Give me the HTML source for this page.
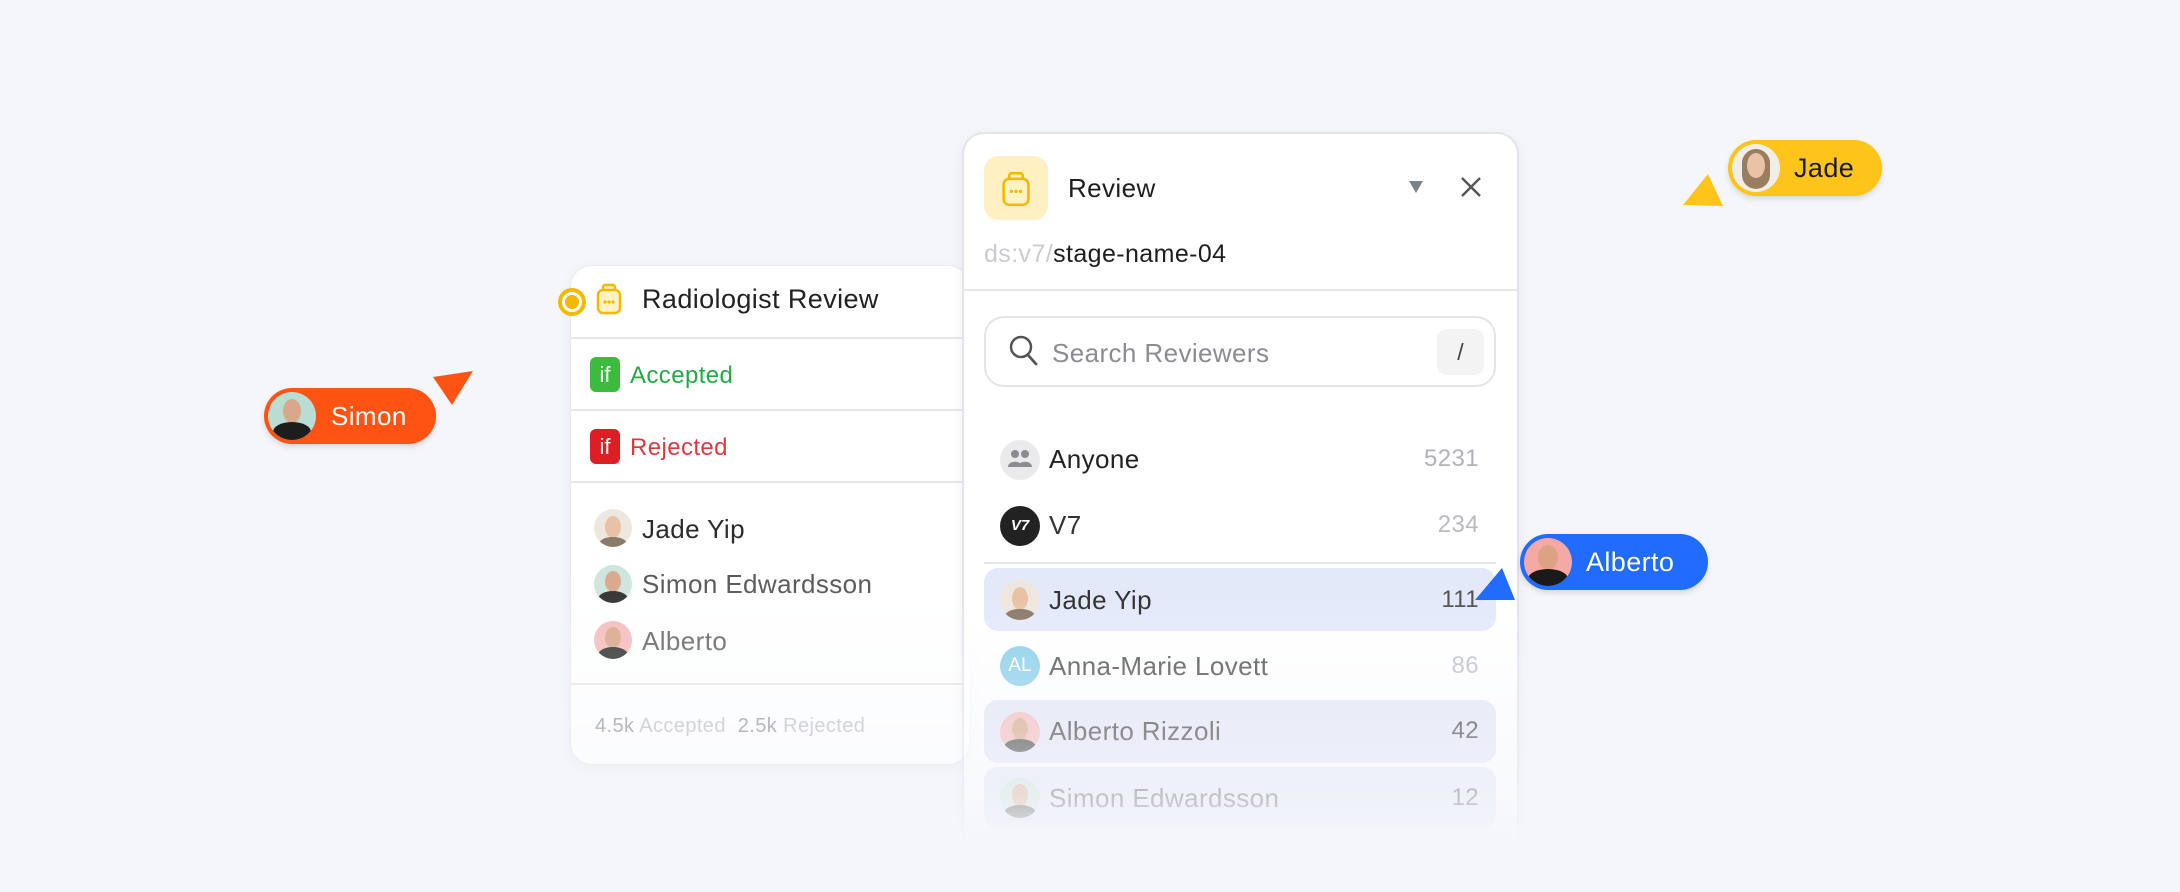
<!DOCTYPE html>
<html><head><meta charset="utf-8"><style>
*{box-sizing:border-box;margin:0;padding:0}
body{width:2180px;height:874px;background:#f4f6fa;position:relative;overflow:hidden;font-family:"Liberation Sans",sans-serif}
.abs{position:absolute}
.grp{position:absolute;left:0;top:0;width:2180px;height:874px}
.g1{-webkit-mask-image:linear-gradient(to bottom,#000 0,#000 560px,rgba(0,0,0,.75) 700px,rgba(0,0,0,.6) 780px,rgba(0,0,0,0) 800px);mask-image:linear-gradient(to bottom,#000 0,#000 560px,rgba(0,0,0,.75) 700px,rgba(0,0,0,.6) 780px,rgba(0,0,0,0) 800px)}
.g2{-webkit-mask-image:linear-gradient(to bottom,#000 0,#000 600px,rgba(0,0,0,.6) 730px,rgba(0,0,0,.3) 800px,rgba(0,0,0,0) 845px);mask-image:linear-gradient(to bottom,#000 0,#000 600px,rgba(0,0,0,.6) 730px,rgba(0,0,0,.3) 800px,rgba(0,0,0,0) 845px)}
.card{position:absolute;left:570px;top:265px;width:400px;height:500px;background:#fff;border:1px solid #e8e9ee;border-radius:22px;box-shadow:0 4px 14px rgba(30,40,80,.05)}
.panel{position:absolute;left:962px;top:132px;width:557px;height:760px;background:#fff;border:2px solid #e3e4e8;border-radius:22px;box-shadow:0 4px 14px rgba(30,40,80,.06)}
.hl{position:absolute;height:2px;background:#e6e7eb}
.t{position:absolute;white-space:nowrap;line-height:1;letter-spacing:0.4px}
.av{position:absolute;border-radius:50%;overflow:hidden}
.pill{position:absolute;border-radius:30px;box-shadow:0 3px 6px rgba(0,0,0,.12)}
</style></head><body>

<div class="grp g1">
<div class="card"></div>
<div class="hl" style="left:571px;top:337px;width:392px"></div>
<div class="hl" style="left:571px;top:409px;width:392px"></div>
<div class="hl" style="left:571px;top:481px;width:392px"></div>
<div class="hl" style="left:571px;top:683px;width:392px"></div>
<div class="abs" style="left:558px;top:288px;width:28px;height:28px;border-radius:50%;border:4px solid #f5b800;background:#fff"></div>
<div class="abs" style="left:565px;top:295px;width:14px;height:14px;border-radius:50%;background:#f5b800"></div>
<svg class="abs" style="left:596px;top:283px" width="26" height="32" viewBox="0 0 26 32"><rect x="7" y="2" width="12" height="6" rx="2" fill="#fff3c4" stroke="#f5b800" stroke-width="2.5"/><rect x="2" y="7" width="22" height="23" rx="5" fill="#fff3c4" stroke="#f5b800" stroke-width="2.5"/><circle cx="9" cy="19" r="1.6" fill="#f5b800"/><circle cx="13" cy="19" r="1.6" fill="#f5b800"/><circle cx="17" cy="19" r="1.6" fill="#f5b800"/></svg>
<div class="t" style="left:642px;top:286px;font-size:27px;color:#222">Radiologist Review</div>
<div class="abs" style="left:590px;top:357px;width:30px;height:35px;border-radius:6px;background:#3dbb3f;color:#fff;font-size:22px;text-align:center;line-height:35px">if</div>
<div class="t" style="left:630px;top:364px;font-size:24px;color:#26a844">Accepted</div>
<div class="abs" style="left:590px;top:429px;width:30px;height:35px;border-radius:6px;background:#dc1f25;color:#fff;font-size:22px;text-align:center;line-height:35px">if</div>
<div class="t" style="left:630px;top:436px;font-size:24px;color:#dc3a3f">Rejected</div>
<div class="av" style="left:594px;top:509px;width:38px;height:38px;background:#eee7df"><div class="abs" style="left:11px;top:7px;width:16px;height:22px;border-radius:50%;background:#e9c2a6"></div><div class="abs" style="left:5px;top:28px;width:28px;height:14px;border-radius:50%;background:#8a7a6a"></div></div>
<div class="t" style="left:642px;top:516px;font-size:26px;color:#2c2c2e">Jade Yip</div>
<div class="av" style="left:594px;top:565px;width:38px;height:38px;background:#cde4dc"><div class="abs" style="left:11px;top:6px;width:16px;height:21px;border-radius:50%;background:#d9a789"></div><div class="abs" style="left:4px;top:26px;width:30px;height:16px;border-radius:50%;background:#2c2c2c"></div></div>
<div class="t" style="left:642px;top:571px;font-size:26px;color:#555">Simon Edwardsson</div>
<div class="av" style="left:594px;top:621px;width:38px;height:38px;background:#f5bcbc"><div class="abs" style="left:11px;top:6px;width:16px;height:21px;border-radius:50%;background:#d9a789"></div><div class="abs" style="left:4px;top:26px;width:30px;height:16px;border-radius:50%;background:#333"></div></div>
<div class="t" style="left:642px;top:628px;font-size:26px;color:#666">Alberto</div>
<div class="t" style="left:595px;top:716px;font-size:20px;color:#9a9ca3">4.5k <span style="color:#c3c5cb">Accepted</span>&nbsp; 2.5k <span style="color:#c3c5cb">Rejected</span></div>
</div>

<div class="grp g2">
<div class="panel"></div>
<div class="abs" style="left:984px;top:156px;width:64px;height:64px;border-radius:14px;background:#fff0c4"></div>
<svg class="abs" style="left:1001px;top:171px" width="30" height="36" viewBox="0 0 26 32"><rect x="7" y="2" width="12" height="6" rx="2" fill="#fff3c4" stroke="#f5b800" stroke-width="2.3"/><rect x="2" y="7" width="22" height="23" rx="5" fill="#fff3c4" stroke="#f5b800" stroke-width="2.3"/><circle cx="9" cy="18" r="1.5" fill="#f5b800"/><circle cx="13" cy="18" r="1.5" fill="#f5b800"/><circle cx="17" cy="18" r="1.5" fill="#f5b800"/></svg>
<div class="t" style="left:1068px;top:175px;font-size:26px;color:#1e1e1e">Review</div>
<svg class="abs" style="left:1408px;top:180px" width="16" height="14"><path d="M1 1h14l-7 12z" fill="#7d818a"/></svg>
<svg class="abs" style="left:1460px;top:176px" width="22" height="22"><path d="M2 2L20 20M20 2L2 20" stroke="#555" stroke-width="2.4"/></svg>
<div class="t" style="left:984px;top:242px;font-size:25px;color:#1e1e1e"><span style="color:#c9cbd0">ds:v7/</span>stage-name-04</div>
<div class="hl" style="left:963px;top:289px;width:555px"></div>
<div class="abs" style="left:984px;top:316px;width:512px;height:71px;border:2px solid #e3e4e8;border-radius:20px"></div>
<svg class="abs" style="left:1008px;top:334px" width="34" height="36"><circle cx="13" cy="13" r="10" fill="none" stroke="#555" stroke-width="2.5"/><path d="M20 21l8 9" stroke="#555" stroke-width="2.8" stroke-linecap="round"/></svg>
<div class="t" style="left:1052px;top:340px;font-size:26px;color:#8a8c92">Search Reviewers</div>
<div class="abs" style="left:1437px;top:329px;width:47px;height:46px;border-radius:10px;background:#f3f3f4;color:#444;font-size:23px;text-align:center;line-height:46px">/</div>
<div class="av" style="left:1000px;top:440px;width:40px;height:40px;background:#eaeaec"></div>
<svg class="abs" style="left:1007px;top:449px" width="26" height="20"><circle cx="8" cy="5" r="4" fill="#8a8c92"/><circle cx="18" cy="5" r="4" fill="#8a8c92"/><path d="M1 18c0-7 14-7 14 0zM11 18c0-7 14-7 14 0z" fill="#8a8c92"/></svg>
<div class="t" style="left:1049px;top:446px;font-size:26px;color:#222">Anyone</div>
<div class="t" style="left:1390px;top:447px;width:89px;text-align:right;font-size:24px;color:#b0b2b8">5231</div>
<div class="av" style="left:1000px;top:506px;width:40px;height:40px;background:#222;color:#fff;font-size:15px;font-weight:bold;text-align:center;line-height:40px;font-style:italic">V7</div>
<div class="t" style="left:1049px;top:512px;font-size:26px;color:#333">V7</div>
<div class="t" style="left:1390px;top:513px;width:89px;text-align:right;font-size:24px;color:#b8bac0">234</div>
<div class="hl" style="left:984px;top:562px;width:512px"></div>
<div class="abs" style="left:984px;top:568px;width:512px;height:63px;border-radius:14px;background:#e4e9fa"></div>
<div class="av" style="left:1000px;top:580px;width:40px;height:40px;background:#eee7df"><div class="abs" style="left:12px;top:7px;width:16px;height:23px;border-radius:50%;background:#e9c2a6"></div><div class="abs" style="left:5px;top:29px;width:30px;height:14px;border-radius:50%;background:#8a7a6a"></div></div>
<div class="t" style="left:1049px;top:587px;font-size:26px;color:#333">Jade Yip</div>
<div class="t" style="left:1390px;top:588px;width:89px;text-align:right;font-size:24px;color:#555">111</div>
<div class="av" style="left:1000px;top:646px;width:40px;height:40px;background:#8fd1ea;color:#fff;font-size:19px;text-align:center;line-height:40px">AL</div>
<div class="t" style="left:1049px;top:653px;font-size:26px;color:#555">Anna-Marie Lovett</div>
<div class="t" style="left:1390px;top:654px;width:89px;text-align:right;font-size:24px;color:#c0c2c8">86</div>
<div class="abs" style="left:984px;top:700px;width:512px;height:63px;border-radius:14px;background:#e4e8f8"></div>
<div class="av" style="left:1000px;top:712px;width:40px;height:40px;background:#f5bcbc"><div class="abs" style="left:12px;top:6px;width:16px;height:22px;border-radius:50%;background:#d9a789"></div><div class="abs" style="left:4px;top:27px;width:32px;height:16px;border-radius:50%;background:#444"></div></div>
<div class="t" style="left:1049px;top:718px;font-size:26px;color:#444">Alberto Rizzoli</div>
<div class="t" style="left:1390px;top:719px;width:89px;text-align:right;font-size:24px;color:#444">42</div>
<div class="abs" style="left:984px;top:767px;width:512px;height:63px;border-radius:14px;background:#e4e8f8"></div>
<div class="av" style="left:1000px;top:778px;width:40px;height:40px;background:#cde4dc"><div class="abs" style="left:12px;top:6px;width:16px;height:22px;border-radius:50%;background:#d9a789"></div><div class="abs" style="left:4px;top:27px;width:32px;height:16px;border-radius:50%;background:#333"></div></div>
<div class="t" style="left:1049px;top:785px;font-size:26px;color:#555">Simon Edwardsson</div>
<div class="t" style="left:1390px;top:786px;width:89px;text-align:right;font-size:24px;color:#555">12</div>
</div>

<div class="pill" style="left:264px;top:388px;width:172px;height:56px;background:#ff5314"></div>
<div class="av" style="left:268px;top:392px;width:48px;height:48px;background:#b9ddd3"><div class="abs" style="left:15px;top:7px;width:18px;height:24px;border-radius:50%;background:#d9a789"></div><div class="abs" style="left:5px;top:30px;width:38px;height:20px;border-radius:50%;background:#1d1d1d"></div></div>
<div class="t" style="left:331px;top:403px;font-size:26px;color:#fff">Simon</div>
<svg class="abs" style="left:430px;top:368px" width="46" height="42"><path d="M3 9L43 3L22 37z" fill="#ff5314"/></svg>

<div class="pill" style="left:1728px;top:140px;width:154px;height:56px;background:#fdc41a"></div>
<div class="av" style="left:1732px;top:144px;width:48px;height:48px;background:#f1ede8"><div class="abs" style="left:10px;top:5px;width:28px;height:40px;border-radius:14px;background:#9a7c5f"></div><div class="abs" style="left:15px;top:9px;width:18px;height:25px;border-radius:50%;background:#eac2a8"></div></div>
<div class="t" style="left:1794px;top:155px;font-size:27px;color:#1a1a1a">Jade</div>
<svg class="abs" style="left:1680px;top:172px" width="46" height="38"><path d="M28 2L3 33L43 34z" fill="#fdc41a"/></svg>

<div class="pill" style="left:1520px;top:534px;width:188px;height:56px;background:#226bff"></div>
<div class="av" style="left:1524px;top:538px;width:48px;height:48px;background:#f5a9a4"><div class="abs" style="left:14px;top:7px;width:20px;height:25px;border-radius:50%;background:#dca283"></div><div class="abs" style="left:4px;top:31px;width:40px;height:20px;border-radius:50%;background:#1a1a1a"></div></div>
<div class="t" style="left:1586px;top:549px;font-size:27px;color:#fff">Alberto</div>
<svg class="abs" style="left:1473px;top:566px" width="46" height="38"><path d="M29 2L2 34L42 34z" fill="#226bff"/></svg>
</body></html>
